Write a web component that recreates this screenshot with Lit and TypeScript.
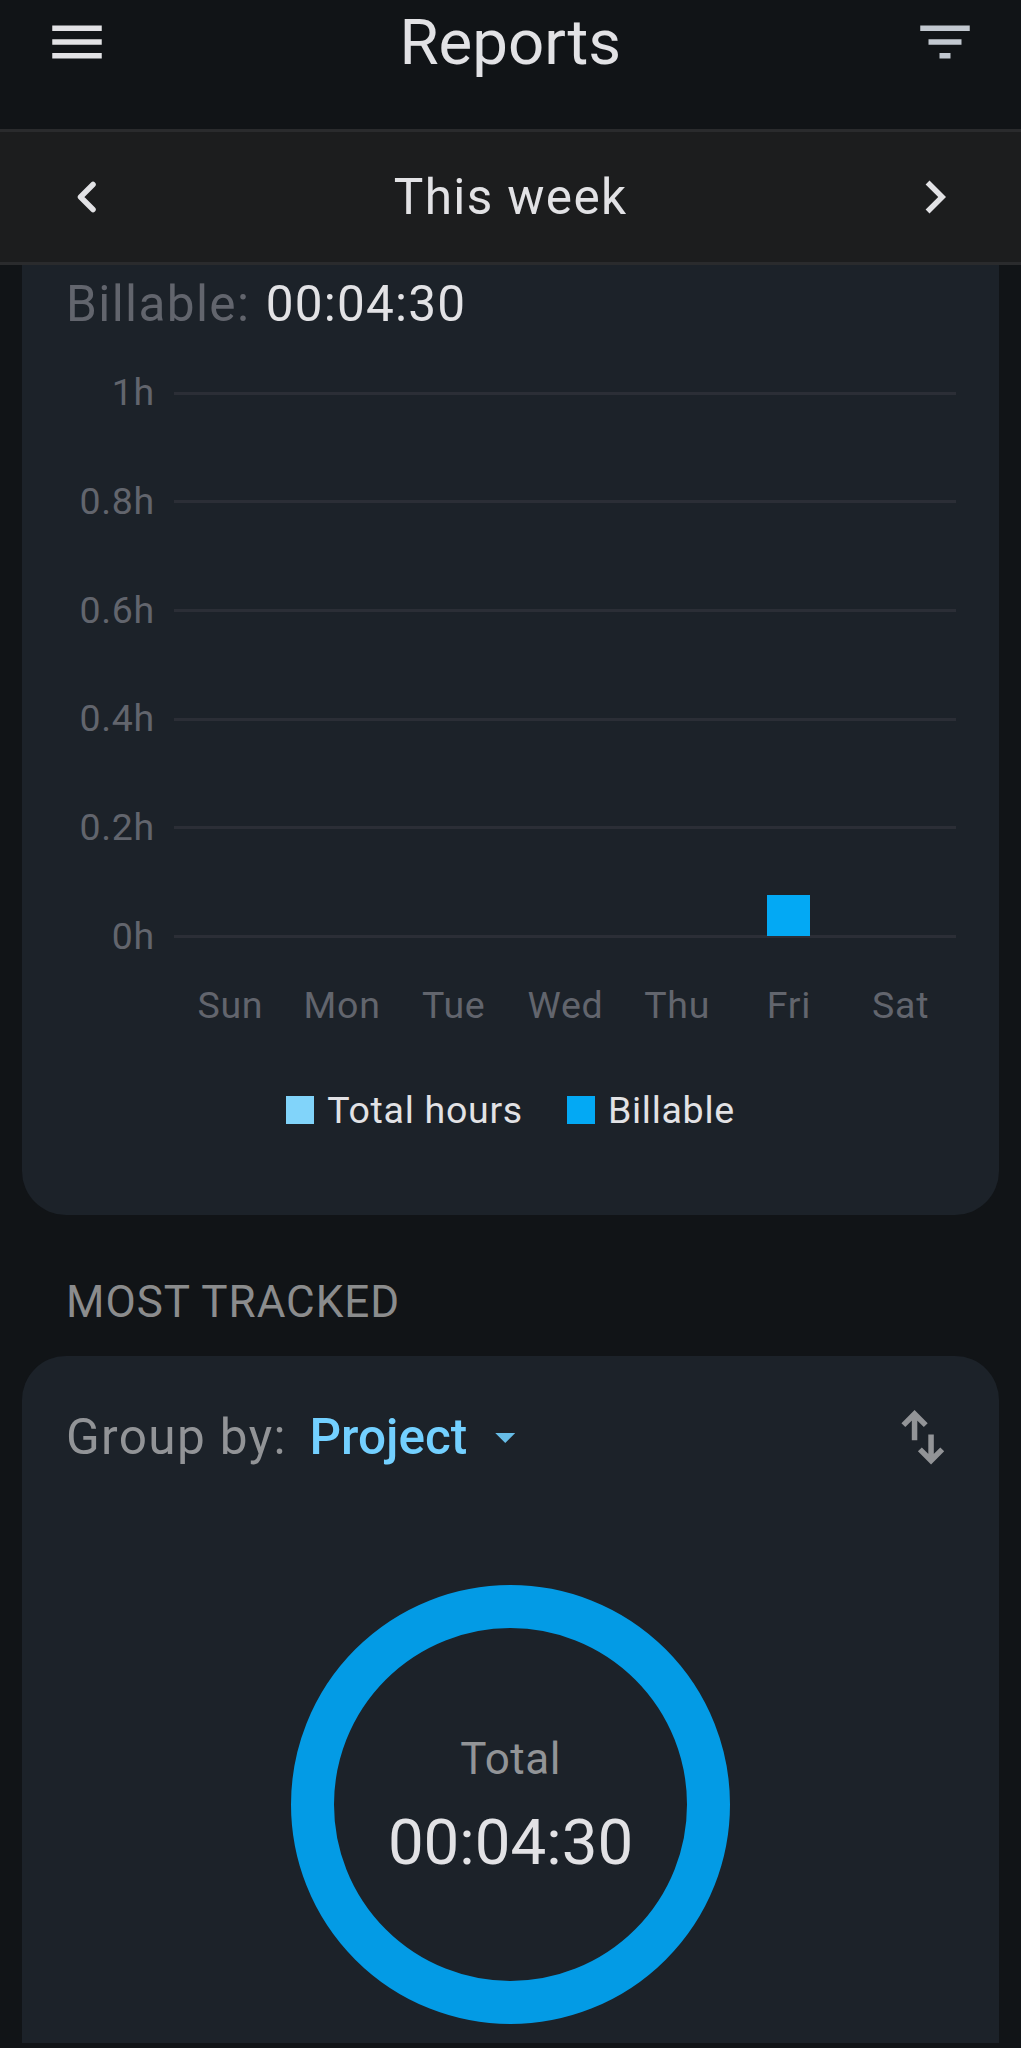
import { LitElement, html, css, svg } from "lit";
import { customElement, property } from "lit/decorators.js";

interface DayEntry {
  label: string;
  billable: number;
}

const MAX_HOURS = 1;
const TICKS = ["1h", "0.8h", "0.6h", "0.4h", "0.2h", "0h"];
const WEEK: DayEntry[] = [
  { label: "Sun", billable: 0 },
  { label: "Mon", billable: 0 },
  { label: "Tue", billable: 0 },
  { label: "Wed", billable: 0 },
  { label: "Thu", billable: 0 },
  { label: "Fri", billable: 0.075 },
  { label: "Sat", billable: 0 },
];

const ICONS = {
  menu: svg`<path d="M3 18h18v-2H3v2zm0-5h18v-2H3v2zm0-7v2h18V6H3z" />`,
  filter: svg`<path d="M10 18h4v-2h-4v2zM3 6v2h18V6H3zm3 7h12v-2H6v2z" />`,
  next: svg`<path d="M10 6L8.59 7.41 13.17 12l-4.58 4.59L10 18l6-6z" />`,
  prev: svg`<path d="M14.55 7.45L10 12l4.55 4.55" fill="none" stroke="currentColor"
    stroke-width="2" stroke-linecap="round" stroke-linejoin="round" />`,
  sort: svg`<path d="M8.93 13.15V3.65M4.86 7.7l4.07-4.07L13 7.7M14.93 11.05v9.5M10.86 16.5l4.07 4.07L19 16.5"
    fill="none" stroke="currentColor" stroke-width="2" />`,
};

@customElement("app-icon")
export class AppIcon extends LitElement {
  @property() name: keyof typeof ICONS = "menu";

  static styles = css`
    :host {
      display: block;
      width: 66px;
      height: 66px;
    }
    .glyph {
      display: block;
      width: 100%;
      height: 100%;
      fill: currentColor;
    }
  `;

  render() {
    return html`<svg class="glyph" viewBox="0 0 24 24">${ICONS[this.name]}</svg>`;
  }
}

@customElement("hours-chart")
export class HoursChart extends LitElement {
  @property({ attribute: false }) days: DayEntry[] = [];

  static styles = css`
    :host {
      display: block;
      font-size: 37.5px;
      letter-spacing: 0.72px;
      color: #62656d;
    }
    .plot {
      display: grid;
      grid-template-columns: 108px 782px;
      grid-template-rows: repeat(6, 108.67px);
      align-items: center;
    }
    .row {
      grid-column: 1 / -1;
      display: grid;
      grid-template-columns: subgrid;
      align-items: center;
    }
    .tick {
      padding: 0 19px 2px 0;
      text-align: right;
      line-height: 44px;
    }
    .rule {
      height: 3px;
      background: #2b2e36;
    }
    .bars {
      grid-column: 2;
      grid-row: 1 / -1;
      align-self: stretch;
      display: grid;
      grid-template-columns: repeat(7, 1fr);
      justify-items: center;
      align-items: end;
      padding: 53.7px 0 55px;
      z-index: 1;
    }
    .bar {
      width: 43.5px;
      background: #03a9f4;
    }
    .days {
      display: grid;
      grid-template-columns: repeat(7, 1fr);
      width: 782px;
      margin-left: 108.5px;
      text-align: center;
      line-height: 28px;
    }
    .legend {
      display: flex;
      justify-content: center;
      align-items: center;
      gap: 44px;
      margin-top: 69px;
      line-height: 44px;
      color: #e2e2e5;
    }
    .key {
      display: flex;
      align-items: center;
      gap: 13px;
    }
    .swatch {
      width: 28px;
      height: 28px;
      background: #03a9f4;
    }
    .swatch.total {
      background: #81d4fa;
    }
  `;

  render() {
    return html`
      <div class="plot">
        ${TICKS.map(
          (t, i) => html`<div class="row" style="grid-row:${i + 1}">
            <span class="tick">${t}</span><span class="rule"></span>
          </div>`
        )}
        <div class="bars">
          ${this.days.map(
            (d) => html`<span class="bar" style="height:${(d.billable / MAX_HOURS) * 100}%"></span>`
          )}
        </div>
      </div>
      <div class="days">${this.days.map((d) => html`<span>${d.label}</span>`)}</div>
      <div class="legend">
        <span class="key"><i class="swatch total"></i>Total hours</span>
        <span class="key"><i class="swatch"></i>Billable</span>
      </div>
    `;
  }
}

@customElement("app-root")
export class AppRoot extends LitElement {
  static styles = css`
    :host {
      display: block;
      width: 1021px;
      height: 2048px;
      overflow: hidden;
      box-sizing: border-box;
      background: #111417;
      color: #e2e2e5;
      font-family: Roboto, "Liberation Sans", sans-serif;
      font-size: 49.5px;
      line-height: 58px;
      letter-spacing: 1.375px;
      -webkit-font-smoothing: antialiased;
    }
    .header {
      display: flex;
      align-items: center;
      justify-content: space-between;
      height: 66px;
      padding: 9px 43.5px 54px 44px;
    }
    .title {
      margin: 0;
      padding: 1px 1px 0 0;
      font-size: 63.6px;
      font-weight: 400;
      line-height: 66px;
      letter-spacing: 0;
    }
    .filter {
      color: #c2c8d0;
    }
    .period {
      display: flex;
      align-items: center;
      justify-content: space-between;
      height: 130px;
      padding: 0 53px 0 53.3px;
      border-top: 3px solid #2a2b2d;
      border-bottom: 3px solid #2a2b2d;
      background: #1c1d1e;
    }
    .card {
      box-sizing: border-box;
      margin: 0 22px;
      padding: 0 44px;
      background: #1c2229;
    }
    .summary {
      height: 950px;
      padding-top: 10px;
      border-radius: 0 0 44px 44px;
    }
    .billable {
      height: 64px;
      letter-spacing: 1.2px;
    }
    .label {
      margin-right: 2px;
      letter-spacing: 1.375px;
      color: #62656d;
    }
    .section {
      margin: 0;
      padding: 61px 66px 28px;
      font-size: 44px;
      font-weight: 400;
      line-height: 52px;
      letter-spacing: 1px;
      color: #8b8c8d;
    }
    .tracked {
      height: 687px;
      border-radius: 44px 44px 0 0;
    }
    .group {
      display: flex;
      align-items: center;
      padding: 48px 0 1px;
      height: 66px;
      color: #929497;
    }
    .project {
      margin-left: 22.5px;
      font-weight: 500;
      letter-spacing: 0;
      color: #73d0ff;
    }
    .caret {
      width: 20px;
      height: 10px;
      margin: 2px 0 0 28px;
      background: #67bde7;
      clip-path: polygon(0 0, 100% 0, 50% 100%);
    }
    .sort {
      margin: 0 -1.3px 0 auto;
    }
    .donut {
      display: flex;
      flex-direction: column;
      align-items: center;
      box-sizing: border-box;
      width: 439px;
      height: 439px;
      margin: 114px auto 0;
      padding-top: 105px;
      border: 43.5px solid #039be5;
      border-radius: 50%;
    }
    .caption {
      font-size: 44px;
      line-height: 52px;
      letter-spacing: 0.5px;
      color: #929497;
    }
    .total {
      padding-top: 20px;
      font-size: 63.6px;
      line-height: 76px;
      letter-spacing: 0;
    }
  `;

  render() {
    return html`
      <header class="header">
        <app-icon name="menu"></app-icon>
        <h1 class="title">Reports</h1>
        <app-icon class="filter" name="filter"></app-icon>
      </header>
      <nav class="period">
        <app-icon name="prev"></app-icon>
        <span>This week</span>
        <app-icon name="next"></app-icon>
      </nav>
      <section class="card summary">
        <div class="billable"><span class="label">Billable:</span> 00:04:30</div>
        <hours-chart .days=${WEEK}></hours-chart>
      </section>
      <h2 class="section">MOST TRACKED</h2>
      <section class="card tracked">
        <div class="group">
          <span>Group by:</span>
          <span class="project">Project</span>
          <i class="caret"></i>
          <app-icon class="sort" name="sort"></app-icon>
        </div>
        <div class="donut">
          <span class="caption">Total</span>
          <span class="total">00:04:30</span>
        </div>
      </section>
    `;
  }
}
